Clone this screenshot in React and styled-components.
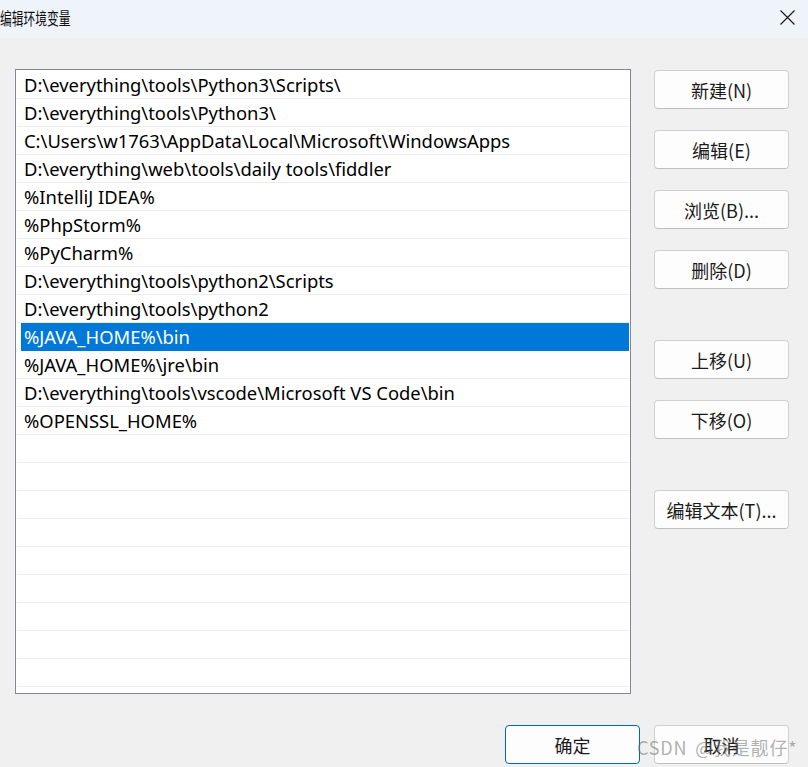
import styled, { createGlobalStyle } from "styled-components";

const GlobalStyle = createGlobalStyle`
  html, body {
    margin: 0;
    padding: 0;
    background: #f0f0f0;
  }
  body {
    font-family: "Noto Sans", "Noto Sans CJK SC", sans-serif;
  }
`;

const paths = [
  "D:\\everything\\tools\\Python3\\Scripts\\",
  "D:\\everything\\tools\\Python3\\",
  "C:\\Users\\w1763\\AppData\\Local\\Microsoft\\WindowsApps",
  "D:\\everything\\web\\tools\\daily tools\\fiddler",
  "%IntelliJ IDEA%",
  "%PhpStorm%",
  "%PyCharm%",
  "D:\\everything\\tools\\python2\\Scripts",
  "D:\\everything\\tools\\python2",
  "%JAVA_HOME%\\bin",
  "%JAVA_HOME%\\jre\\bin",
  "D:\\everything\\tools\\vscode\\Microsoft VS Code\\bin",
  "%OPENSSL_HOME%",
];

const TOTAL_ROWS = 23;
const SELECTED = 9;

const sideButtons = [
  { label: "新建(N)" },
  { label: "编辑(E)" },
  { label: "浏览(B)..." },
  { label: "删除(D)" },
  { label: "上移(U)", space: true },
  { label: "下移(O)" },
  { label: "编辑文本(T)...", space: true },
];

const Dialog = () => {
  const rows = Array.from({ length: TOTAL_ROWS }, (_, i) => paths[i] || "");

  return (
    <Window>
      <GlobalStyle />
      <TitleBar>
        <Title>编辑环境变量</Title>
        <CloseIcon viewBox="0 0 15 15">
          <path d="M0.5 0.5 L14.5 14.5 M14.5 0.5 L0.5 14.5" stroke="#1a1a1a" strokeWidth="1.2" />
        </CloseIcon>
      </TitleBar>
      <Body>
        <ListBox>
          {rows.map((text, i) => (
            <Row key={i} $selected={i === SELECTED}>
              {text}
            </Row>
          ))}
        </ListBox>
        <ButtonColumn>
          {sideButtons.map((b) => (
            <Button key={b.label} $space={b.space}>
              {b.label}
            </Button>
          ))}
        </ButtonColumn>
      </Body>
      <Footer>
        <Button $primary>确定</Button>
        <Button>取消</Button>
        <Watermark>CSDN @我是靓仔*</Watermark>
      </Footer>
    </Window>
  );
};

export default Dialog;

const Window = styled.div`
  width: 808px;
  height: 767px;
  background: #f0f0f0;
  display: flex;
  flex-direction: column;
  overflow: hidden;
`;

const TitleBar = styled.div`
  height: 38px;
  background: #eff4fb;
  display: flex;
  align-items: center;
  justify-content: space-between;
  padding-right: 13px;
`;

const Title = styled.div`
  font-size: 17px;
  color: #111;
  font-family: "Noto Sans CJK SC", sans-serif;
  margin-top: -4px;
  transform: scaleX(0.69);
  transform-origin: left center;
`;

const CloseIcon = styled.svg`
  width: 15px;
  height: 15px;
  margin-top: -4px;
`;

const Body = styled.div`
  display: flex;
  padding: 31px 0 0 15px;
  gap: 23px;
`;

const ListBox = styled.div`
  width: 614px;
  height: 622px;
  border: 1px solid #828790;
  background: #fff;
  padding-top: 1px;
  box-sizing: content-box;
  overflow: hidden;
  display: flex;
  flex-direction: column;
`;

const Row = styled.div`
  flex: none;
  height: 27px;
  margin-left: ${(p) => (p.$selected ? "5px" : "1px")};
  margin-right: 1px;
  padding-left: ${(p) => (p.$selected ? "3px" : "7px")};
  border-bottom: 1px solid ${(p) => (p.$selected ? "#0078d7" : "#ececec")};
  background: ${(p) => (p.$selected ? "#0078d7" : "#fff")};
  color: ${(p) => (p.$selected ? "#fff" : "#000")};
  font-family: "Noto Sans", sans-serif;
  font-size: 18.4px;
  line-height: 28px;
  white-space: nowrap;
`;

const ButtonColumn = styled.div`
  display: flex;
  flex-direction: column;
  gap: 21px;
  padding-top: 1px;
`;

const Button = styled.div`
  position: relative;
  width: 133px;
  height: 37px;
  margin-top: ${(p) => (p.$space ? "30px" : "0")};
  border: 1px solid ${(p) => (p.$primary ? "#0067c0" : "#d0d0d0")};
  border-bottom-color: ${(p) => (p.$primary ? "#0067c0" : "#c0c0c0")};
  border-radius: 4px;
  background: #fdfdfd;
  display: flex;
  align-items: center;
  justify-content: center;
  font-family: "Noto Sans CJK SC", sans-serif;
  font-size: 18px;
  color: #1a1a1a;
`;

const Footer = styled.div`
  position: relative;
  display: flex;
  justify-content: flex-end;
  gap: 14px;
  padding: 31px 19px 0 0;
`;

const Watermark = styled.div`
  position: absolute;
  left: 637px;
  top: 40px;
  font-family: "Noto Sans CJK SC", sans-serif;
  font-size: 18px;
  letter-spacing: 0.8px;
  word-spacing: 3px;
  color: rgba(110, 110, 110, 0.55);
  white-space: nowrap;
  pointer-events: none;
`;
